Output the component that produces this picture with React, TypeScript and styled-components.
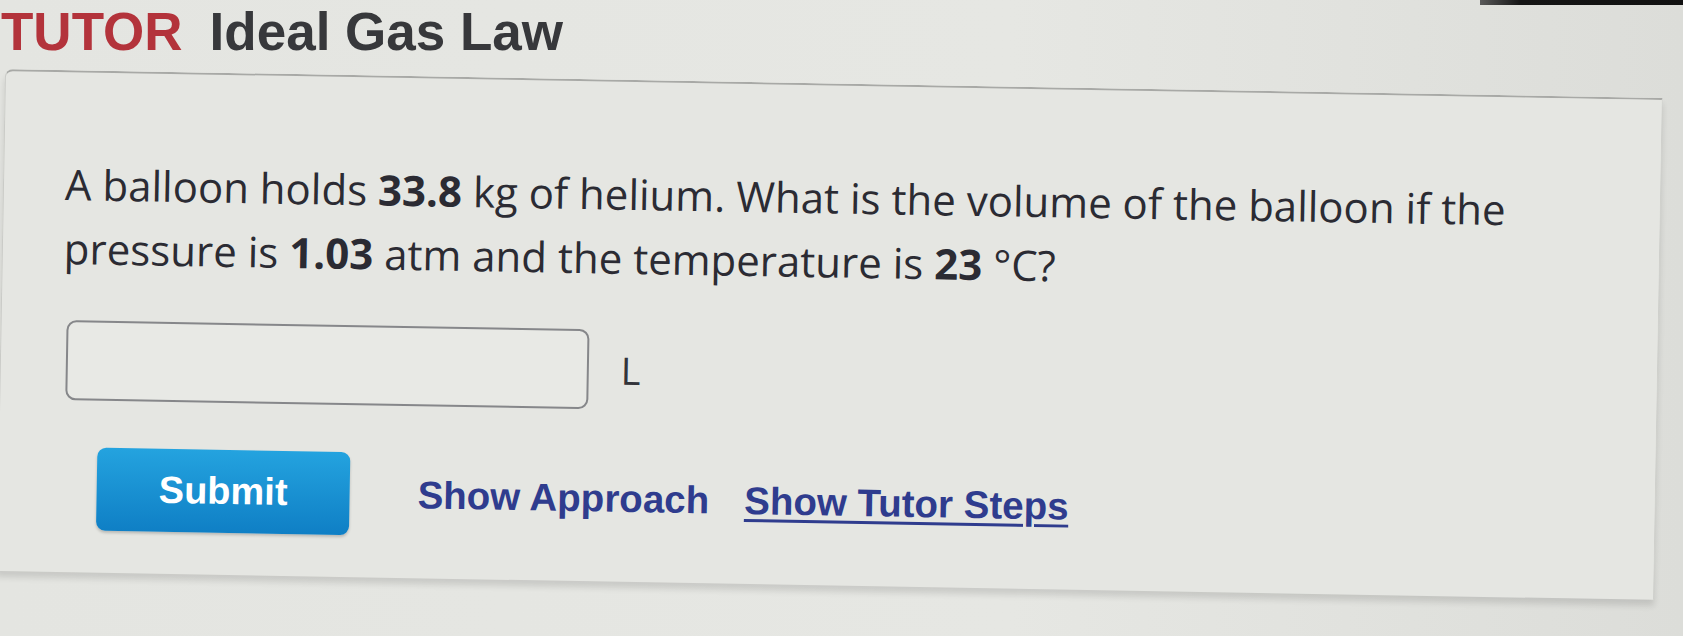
import React from 'react';
import styled, { createGlobalStyle } from 'styled-components';

const GlobalStyle = createGlobalStyle`
  html, body {
    margin: 0;
    padding: 0;
    background: #e2e3df;
  }
  body {
    width: 1683px;
    height: 636px;
    overflow: hidden;
    font-family: 'Liberation Sans', Arial, sans-serif;
  }
`;

function App() {
  return (
    <Page>
      <GlobalStyle />
      <TopEdge>
        <Bezel />
      </TopEdge>
      <Header>
        <Brand>TUTOR</Brand>
        <Topic>Ideal Gas Law</Topic>
      </Header>
      <Card>
        <Question>
          A balloon holds <Num>33.8</Num> kg of helium. What is the volume of
          the balloon if the pressure is <Num>1.03</Num> atm and the temperature
          is <Num>23</Num> °C?
        </Question>
        <AnswerRow>
          <AnswerBox type='text' aria-label='answer' />
          <Unit>L</Unit>
        </AnswerRow>
        <Actions>
          <SubmitButton type='button'>Submit</SubmitButton>
          <ActionLink href='#'>Show Approach</ActionLink>
          <ActionLink href='#' $underline>
            Show Tutor Steps
          </ActionLink>
        </Actions>
      </Card>
    </Page>
  );
}

export default App;

const Page = styled.div`
  width: 1683px;
  height: 636px;
  display: flex;
  flex-direction: column;
  background: linear-gradient(to right, #e4e5e1 0%, #e6e7e3 60%, #dcddd9 100%);
`;

const TopEdge = styled.div`
  height: 5px;
  display: flex;
  justify-content: flex-end;
`;

const Bezel = styled.div`
  width: 203px;
  height: 5px;
  background: linear-gradient(to right, #5a5a5a, #151515 20%, #111);
`;

const Header = styled.div`
  display: flex;
  align-items: baseline;
  gap: 27px;
  padding-left: 1px;
  margin-top: -4px;
  font-size: 53px;
  font-weight: 700;
  line-height: normal;
`;

const Brand = styled.span`
  color: #b3333b;
`;

const Topic = styled.span`
  color: #37383b;
`;

const Card = styled.div`
  box-sizing: border-box;
  width: 1658px;
  margin-top: 7px;
  margin-left: 5px;
  padding: 80px 0 42px 61px;
  background: #e5e6e2;
  border-top: 2px solid #a8a9a6;
  border-left: 1px solid #cacbc7;
  border-right: 1px solid #cfd0cc;
  border-radius: 8px 0 0 0;
  box-shadow: 0 6px 6px rgba(0, 0, 0, 0.12);
  transform: rotate(1deg);
  transform-origin: 0 0;
`;

const Question = styled.p`
  margin: 0;
  max-width: 1520px;
  font-family: 'Open Sans', 'Liberation Sans', sans-serif;
  font-size: 42px;
  line-height: 64px;
  color: #2b2b33;
`;

const Num = styled.b`
  font-weight: 700;
`;

const AnswerRow = styled.div`
  display: flex;
  align-items: center;
  gap: 32px;
  margin-top: 40px;
  margin-left: 4px;
`;

const AnswerBox = styled.input`
  box-sizing: border-box;
  width: 523px;
  height: 80px;
  border: 2px solid #86878a;
  border-radius: 10px;
  background: #e8e9e5;
  outline: none;
`;

const Unit = styled.span`
  font-family: 'Open Sans', 'Liberation Sans', sans-serif;
  font-size: 38px;
  color: #33343a;
`;

const Actions = styled.div`
  display: flex;
  align-items: center;
  margin-top: 47px;
  margin-left: 37px;
`;

const SubmitButton = styled.button`
  width: 253px;
  height: 83px;
  margin-right: 68px;
  border: none;
  border-radius: 9px;
  background: linear-gradient(#24a3df, #0f7fc5);
  box-shadow: 0 2px 3px rgba(0, 0, 0, 0.2);
  color: #fff;
  font-family: 'Liberation Sans', Arial, sans-serif;
  font-size: 38px;
  font-weight: 700;
  cursor: pointer;
`;

const ActionLink = styled.a<{ $underline?: boolean }>`
  margin-right: 35px;
  color: #2f3c8e;
  font-family: 'Liberation Sans', Arial, sans-serif;
  font-size: 38.5px;
  font-weight: 700;
  text-decoration: ${(p) => (p.$underline ? 'underline' : 'none')};
  text-decoration-thickness: 3px;
  text-underline-offset: 5px;
`;
